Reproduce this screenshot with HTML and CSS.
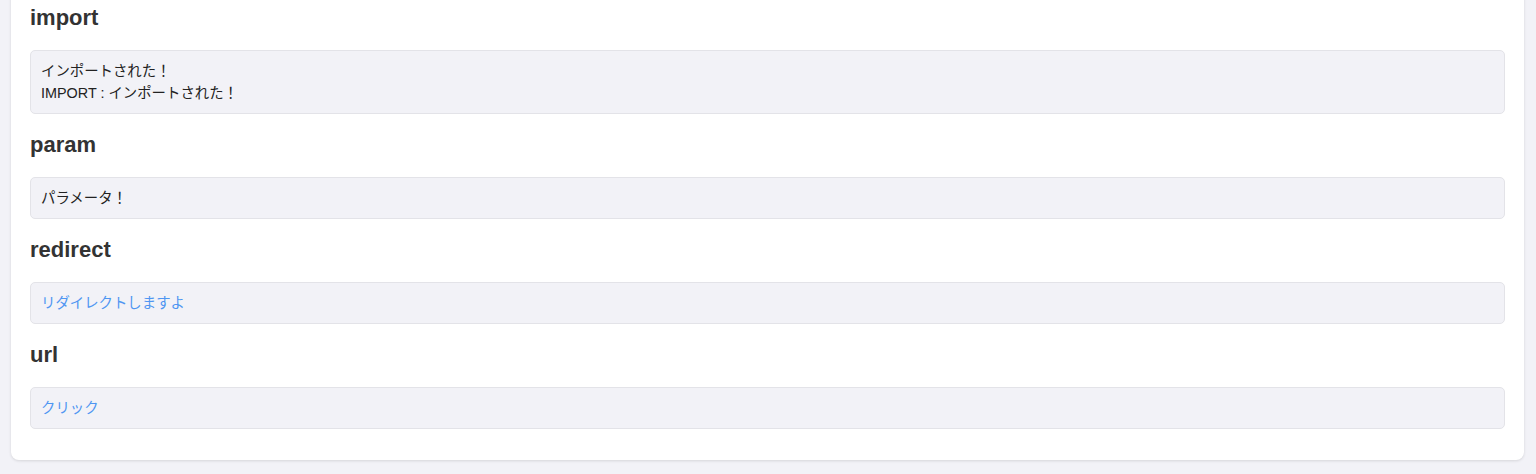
FILE: index.html
```html
<!DOCTYPE html>
<html lang="ja">
<head>
<meta charset="utf-8">
<title>demo</title>
<link rel="stylesheet" href="styles.css">
</head>
<body>
<div class="page">
  <div class="card">
    <section class="item">
      <h3 class="item-title">import</h3>
      <div class="item-box">インポートされた！<br>IMPORT : インポートされた！</div>
    </section>
    <section class="item">
      <h3 class="item-title">param</h3>
      <div class="item-box">パラメータ！</div>
    </section>
    <section class="item">
      <h3 class="item-title">redirect</h3>
      <div class="item-box"><a class="item-link" href="#">リダイレクトしますよ</a></div>
    </section>
    <section class="item">
      <h3 class="item-title">url</h3>
      <div class="item-box"><a class="item-link" href="#">クリック</a></div>
    </section>
  </div>
</div>
</body>
</html>
```
FILE: styles.css
```css
html, body {
  margin: 0;
  padding: 0;
  background: #f2f2f7;
  font-family: "Liberation Sans", Arial, "Noto Sans CJK JP", sans-serif;
  color: #222;
}
.page {
  padding: 0 12px 14px 11px;
}
.card {
  margin-top: -13px;
  background: #fff;
  border-radius: 8px;
  box-shadow: 0 1px 3px rgba(0, 0, 0, 0.12);
  padding: 0 19px 31px 19px;
  display: flex;
  flex-direction: column;
}
.item-title {
  margin: 18px 0 19px;
  font-size: 22px;
  line-height: 26px;
  font-weight: bold;
  color: #333;
}
.item-box {
  background: #f2f2f7;
  border: 1px solid #e3e3e8;
  border-radius: 5px;
  padding: 9px 10px;
  font-size: 14.4px;
  line-height: 22px;
  color: #222;
}
.item-link {
  color: #4f96f2;
  text-decoration: none;
}
```
